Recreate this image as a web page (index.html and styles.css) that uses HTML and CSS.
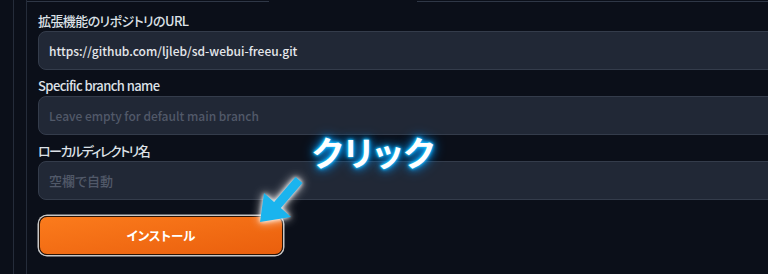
FILE: index.html
```html
<!DOCTYPE html>
<html lang="ja">
<head>
<meta charset="utf-8">
<link rel="stylesheet" href="styles.css">
</head>
<body>
<div class="outer">
  <div class="panel">
    <div class="tabline">
      <div class="seg seg-left"></div>
      <div class="seg seg-gap"></div>
      <div class="seg seg-right"></div>
    </div>
    <div class="content">
      <div class="field">
        <div class="label">拡張機能のリポジトリのURL</div>
        <div class="input"><span class="value">https://github.com/ljleb/sd-webui-freeu.git</span></div>
      </div>
      <div class="field">
        <div class="label">Specific branch name</div>
        <div class="input"><span class="placeholder">Leave empty for default main branch</span></div>
      </div>
      <div class="field">
        <div class="label label-kana">ローカルディレクトリ名</div>
        <div class="input"><span class="placeholder placeholder-cjk">空欄で自動</span></div>
      </div>
      <div class="button">インストール</div>
    </div>
  </div>
</div>
<div class="callout">クリック</div>
<svg class="arrow" width="80" height="80" viewBox="0 0 80 80">
  <polygon points="20,62 24,33 34.1,42.1 55.6,17.1 62.4,22.9 40.9,47.9 51,57" fill="#1ab4ee"/>
</svg>
</body>
</html>
```
FILE: styles.css
```css
html, body {
  margin: 0;
  padding: 0;
  background: #0b0f19;
  width: 768px;
  height: 274px;
  overflow: hidden;
  font-family: "Noto Sans CJK JP", "Noto Sans", sans-serif;
  font-feature-settings: "palt";
}

.outer {
  margin-left: 13px;
  border-left: 1px solid #252c3a;
  height: 274px;
  padding-left: 12px;
  width: 1000px;
}

.panel {
  border-left: 1px solid #252c3a;
  height: 274px;
}

.tabline {
  display: flex;
  height: 2px;
}

.seg {
  height: 1px;
  border-bottom: 1px solid #2f3746;
}

.seg-left { width: 242px; }
.seg-gap { width: 148px; border-bottom-color: transparent; }
.seg-right { flex: 1; }

.content {
  padding: 9px 0 0 11px;
  display: flex;
  flex-direction: column;
}

.field {
  display: flex;
  flex-direction: column;
  margin-bottom: 6px;
}

.label {
  height: 20px;
  line-height: 20px;
  font-size: 13px;
  font-weight: 500;
  letter-spacing: -0.6px;
  color: #dde1e7;
}

.label-kana { letter-spacing: -1.5px; }

.input {
  height: 37px;
  border: 1px solid #343c4b;
  border-radius: 8px;
  background: #212836;
  display: flex;
  align-items: center;
  padding-left: 10px;
  font-size: 12px;
  font-weight: 500;
}

.value { color: #e5e7eb; }
.placeholder { color: #515969; }
.placeholder-cjk { font-size: 13px; }

.button {
  margin-top: 10px;
  margin-left: 1px;
  width: 244px;
  height: 39px;
  box-sizing: border-box;
  border: 1px solid #2a1304;
  box-shadow: 0 0 0 1.5px #c8c8c8;
  border-radius: 8px;
  background: linear-gradient(to bottom right, #fb7b1c, #ea5f0d);
  color: #ffffff;
  font-weight: 700;
  font-size: 12.5px;
  display: flex;
  align-items: center;
  justify-content: center;
}

.callout {
  position: absolute;
  left: 312px;
  top: 128px;
  font-size: 34px;
  font-weight: 700;
  line-height: 48px;
  color: #ffffff;
  letter-spacing: 1px;
  text-shadow: 0 0 2px #18c0ff, 0 0 3px #18c0ff, 0 0 5px #10b0ff, 0 0 9px #0aa0ff, 0 0 14px #0a90ff;
}

.arrow {
  position: absolute;
  left: 240px;
  top: 160px;
  filter: drop-shadow(0 0 2px #ffffff) drop-shadow(0 0 5px rgba(255,255,255,0.8));
}
```
